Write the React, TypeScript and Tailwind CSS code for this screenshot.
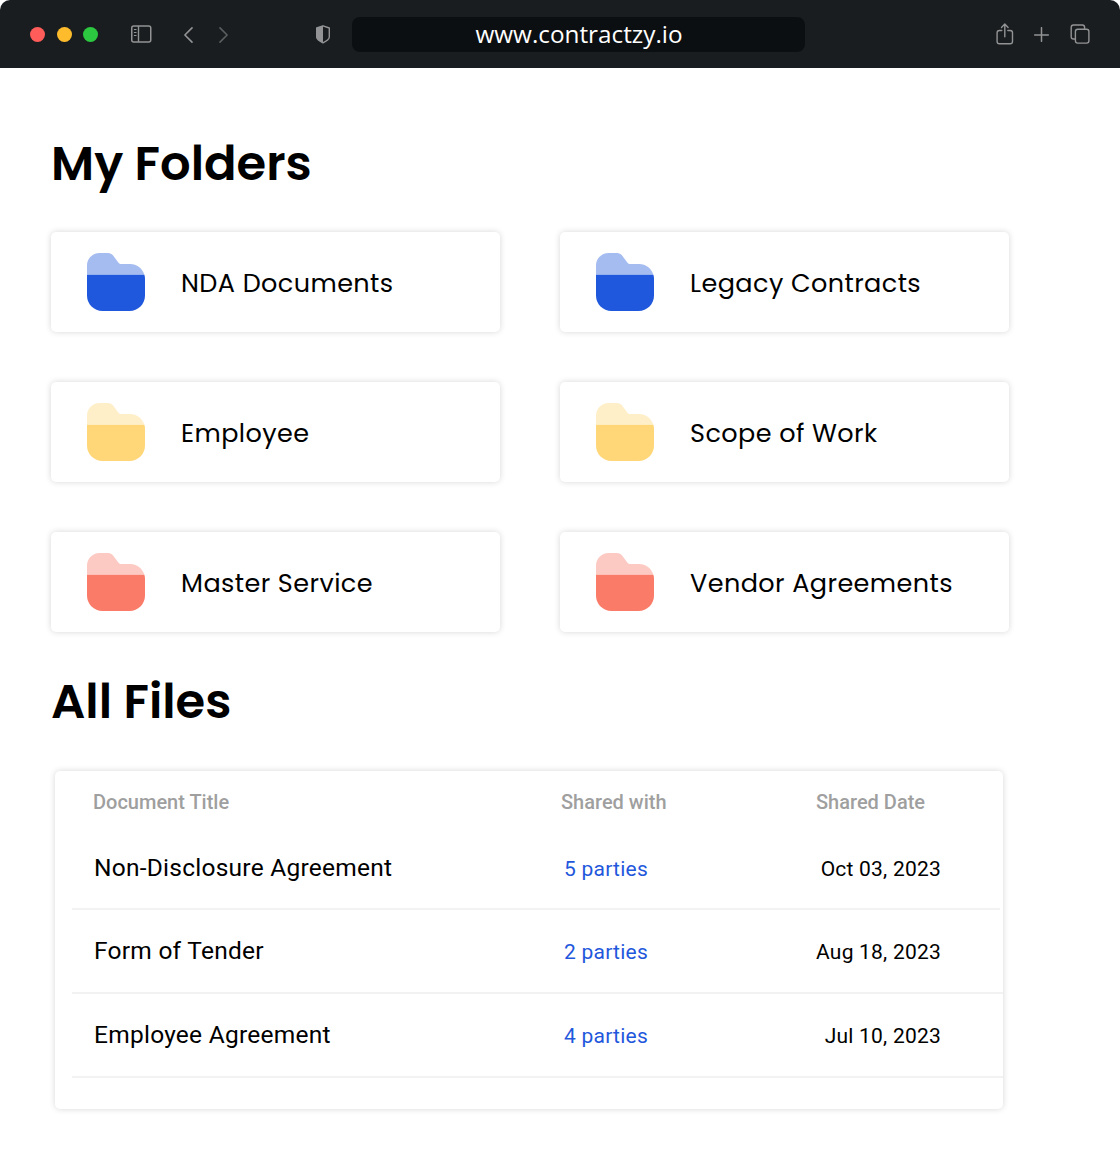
type Folder = { name: string; color: string };
type FileRow = {
  title: string;
  parties: string;
  date: string;
  size: string;
  metaOffset: string;
};

const folders: Folder[] = [
  { name: "NDA Documents", color: "text-[#1f58dc]" },
  { name: "Legacy Contracts", color: "text-[#1f58dc]" },
  { name: "Employee", color: "text-[#ffd778]" },
  { name: "Scope of Work", color: "text-[#ffd778]" },
  { name: "Master Service", color: "text-[#fb7b69]" },
  { name: "Vendor Agreements", color: "text-[#fb7b69]" },
];

const files: FileRow[] = [
  { title: "Non-Disclosure Agreement", parties: "5 parties", date: "Oct 03, 2023", size: "h-[83px] w-[928px]", metaOffset: "pt-[3px]" },
  { title: "Form of Tender", parties: "2 parties", date: "Aug 18, 2023", size: "h-[84px] w-[931px]", metaOffset: "pt-0.5" },
  { title: "Employee Agreement", parties: "4 parties", date: "Jul 10, 2023", size: "h-[84px] w-[931px]", metaOffset: "pt-0.5" },
];

function FolderIcon({ className }: { className: string }) {
  return (
    <svg width="58" height="58" viewBox="0 0 58 58" fill="currentColor" className={className}>
      <path
        opacity="0.4"
        d="M0 21.7V12.5C0 5.6 5.6 0 12.5 0h8.6c2 0 3.8.9 5 2.500l5.400 7.300c.5.7 1 1.100 1.800 1.100h9.900c6.600 0 12.300 4.400 14.200 10.800z"
      />
      <path d="M0 21.7h57.4c.4 1.3.6 2.8.6 4.3v16.5C58 51.1 51.1 58 42.5 58h-27C6.9 58 0 51.1 0 42.5z" />
    </svg>
  );
}

function BrowserBar() {
  return (
    <div className="bg-white">
      <header className="flex h-[68px] items-center rounded-t-[10px] bg-[#1a1d1f] pl-[30px] pr-[30px] text-[#929394]">
        <div className="flex w-[68px]">
          <span className="size-[15px] rounded-full bg-[#ff5c5a]" />
          <span className="ml-3 size-[15px] rounded-full bg-[#febc2c]" />
          <span className="ml-[11px] size-[15px] rounded-full bg-[#2bc840]" />
        </div>
        <svg className="ml-[33px]" width="21" height="18" viewBox="0 0 21 18" fill="none" stroke="currentColor">
          <rect x="0.75" y="0.9" width="19" height="16" rx="2" strokeWidth="1.5" />
          <path d="M7.5 1v16" strokeWidth="1.4" />
          <path d="M2.9 4.5h2.6M2.9 7.500h2.600M2.900 10.500h2.600" strokeWidth="1.1" />
        </svg>
        <svg className="ml-8 mt-px" width="9" height="16" viewBox="0 0 9 16" fill="none" stroke="currentColor" strokeWidth="1.6" strokeLinecap="round" strokeLinejoin="round">
          <path d="M8 .9.9 8 8 15.1" />
        </svg>
        <svg className="ml-[26px] mt-px text-[#5b5e5f]" width="9" height="16" viewBox="0 0 9 16" fill="none" stroke="currentColor" strokeWidth="1.6" strokeLinecap="round" strokeLinejoin="round">
          <path d="M1 .9 8.1 8 1 15.1" />
        </svg>
        <svg className="ml-[87px] mt-px" width="16" height="19" viewBox="0 0 16 19" fill="none">
          <path d="M8 .8 14.3 3v9c0 2-2.3 3.8-6.3 5.9C4 15.800 1.700 14 1.700 12V3z" stroke="currentColor" strokeWidth="1.4" strokeLinejoin="round" />
          <path d="M8 .8 1.300 3v9C1.300 14 4 16 8 18z" fill="currentColor" />
        </svg>
        <div className="ml-[21px] flex h-[35px] w-[453px] items-center justify-center rounded-[8px] bg-[#0c0f11]">
          <span className="-mt-0.5 pl-px font-['Segoe_UI','Open_Sans',sans-serif] text-[24.3px] leading-[33px] text-white">
            www.contractzy.io
          </span>
        </div>
        <svg className="ml-[191px]" width="18" height="22" viewBox="0 0 18 22" fill="none" stroke="currentColor" strokeWidth="1.4" strokeLinecap="round" strokeLinejoin="round">
          <path d="M5.800 7.500H3.400c-1.500 0-2.300.8-2.300 2.200v8.800c0 1.500.8 2.300 2.300 2.300h10.800c1.500 0 2.300-.8 2.300-2.300V9.700c0-1.400-.8-2.200-2.300-2.200h-2.400" />
          <path d="M8.800 13.700V1.500M5.500 4.400l3.300-3.300 3.300 3.300" />
        </svg>
        <svg className="ml-5" width="15" height="15" viewBox="0 0 15 15" fill="none" stroke="currentColor" strokeWidth="1.5" strokeLinecap="round">
          <path d="M7.500.7v13.600M.7 7.900h13.600" />
        </svg>
        <svg className="ml-[21px]" width="20" height="20" viewBox="0 0 20 20" fill="none" stroke="currentColor" strokeWidth="1.4">
          <path d="M5.200 15H3.500C2 15 1.200 14.200 1.200 12.700V3.300C1.200 1.800 2 1 3.500 1h8.800c1.500 0 2.300.8 2.300 2.300v1.900" />
          <rect x="5.400" y="5.300" width="13.500" height="13.800" rx="2.300" />
        </svg>
      </header>
    </div>
  );
}

export default function App() {
  return (
    <div className="h-[1160px] w-[1120px] overflow-hidden bg-white text-black">
      <BrowserBar />
      <main className="pl-[51px] pt-[66px]">
        <h1 className="font-[Poppins,Inter,sans-serif] text-[48px] font-semibold leading-[60px]">My Folders</h1>
        <div className="mt-[38px] grid grid-cols-[449px_449px] gap-x-[60px] gap-y-[50px]">
          {folders.map((f) => (
            <div key={f.name} className="flex h-[100px] items-center rounded-[5px] bg-white pl-9 shadow-[0_0_6px_rgba(0,0,0,0.16)]">
              <FolderIcon className={f.color} />
              <span className="ml-9 pt-0.5 font-[Poppins,Inter,sans-serif] text-[25.5px] leading-[34px] tracking-[0.42px]">{f.name}</span>
            </div>
          ))}
        </div>
        <h2 className="mt-10 font-[Poppins,Inter,sans-serif] text-[48px] font-semibold leading-[60px]">All Files</h2>
        <section className="ml-1 mt-[39px] h-[338px] w-[948px] rounded-[5px] bg-white font-[Roboto] shadow-[0_0_6px_rgba(0,0,0,0.16)]">
          <div className="flex h-14 pl-[38px] pt-[19px] text-[20px] font-medium leading-6 text-[#9f9f9f]">
            <span className="w-[468px]">Document Title</span>
            <span className="w-[255px]">Shared with</span>
            <span>Shared Date</span>
          </div>
          {files.map((r) => (
            <div key={r.title} className={`ml-[17px] flex items-center border-b-2 border-[#f2f2f2] pl-[22px] font-[370] ${r.size}`}>
              <span className="w-[470px] text-[24.5px] leading-7 tracking-[0.25px]">{r.title}</span>
              <span className={`w-[180px] text-[21px] leading-6 tracking-[0.24px] text-[#1f58dc] ${r.metaOffset}`}>{r.parties}</span>
              <span className={`w-[197px] text-right text-[21px] leading-6 tracking-[0.22px] ${r.metaOffset}`}>{r.date}</span>
            </div>
          ))}
        </section>
      </main>
    </div>
  );
}
